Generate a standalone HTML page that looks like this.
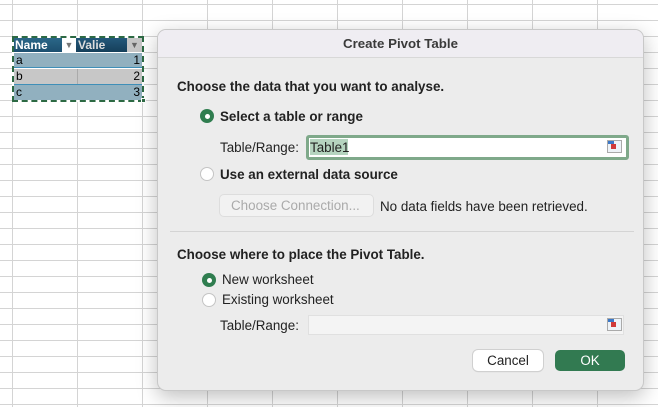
<!DOCTYPE html>
<html><head><style>
*{margin:0;padding:0;box-sizing:border-box}
body{width:658px;height:407px;overflow:hidden;background:#fff;font-family:"Liberation Sans",sans-serif;position:relative}
.grid{position:absolute;inset:0;background-image:linear-gradient(to right,#d4d4d4 1px,transparent 1px),linear-gradient(to bottom,#d4d4d4 1px,transparent 1px);background-size:65px 16px;background-position:12px 4px}
.abs{position:absolute}
.dlg{position:absolute;left:157px;top:29px;width:487px;height:362px;background:#ececec;border-radius:9px;border:1px solid #c8c8c8;box-shadow:0 6px 20px rgba(0,0,0,.25);overflow:hidden;color:#222}
.tb{height:28px;background:#efedf2;border-bottom:1px solid #d8d8d8;text-align:center;font-weight:bold;font-size:13.3px;line-height:28px;color:#3a3a3a}
.t{position:absolute;font-size:13.4px;white-space:nowrap}
.b{font-weight:bold}
.r{position:absolute;width:14px;height:14px;border-radius:50%;background:#fff;border:1px solid #c4c4c4}
.r.on{background:#2f7d4f;border:none}
.r.on:after{content:"";position:absolute;left:4.5px;top:4.5px;width:5px;height:5px;border-radius:50%;background:#fff}
.ic{position:absolute;width:15px;height:13px;border:1px solid #aaa;background:#eef3f8}
.cell{font-size:12px;line-height:15px;padding:0 2px}
</style></head><body>
<div class="grid"></div>
<div class="abs" style="left:12px;top:36px;width:132px;height:66px;border:2px dashed #2d6a44;background:#fff"></div>
<div class="abs" style="left:14px;top:38px;width:49px;height:14px;background:linear-gradient(#2b6788,#1d4f6f);color:#fff;font-weight:bold;font-size:12px;line-height:14px;padding-left:1px">Name</div>
<div class="abs" style="left:62px;top:38px;width:14px;height:14px;background:#fff;color:#777;font-size:9px;text-align:center;line-height:14px">▼</div>
<div class="abs" style="left:76px;top:38px;width:51px;height:14px;background:linear-gradient(#24587a,#153f5a);color:#ddd;font-weight:bold;font-size:12px;line-height:14px;padding-left:2px">Valie</div>
<div class="abs" style="left:127px;top:38px;width:15px;height:14px;background:#c6c6c6;color:#666;font-size:9px;text-align:center;line-height:14px">▼</div>
<div class="abs cell" style="left:14px;top:53px;width:128px;height:15px;background:#91b0bf;border-bottom:1px solid #3f8fb8">a<span style="float:right">1</span></div>
<div class="abs cell" style="left:14px;top:69px;width:128px;height:16px;background:#c7c7c7;border-bottom:1px solid #3f8fb8">b<span style="float:right">2</span></div>
<div class="abs" style="left:77px;top:69px;width:1px;height:15px;background:#aaa"></div>
<div class="abs cell" style="left:14px;top:85px;width:128px;height:15px;background:#91b0bf">c<span style="float:right">3</span></div>
<div class="abs" style="left:141px;top:98px;width:5px;height:5px;background:#2d6a44;border:1px solid #fff"></div>

<div class="dlg">
<div class="tb">Create Pivot Table</div>
<div class="t b" style="left:19px;top:49px">Choose the data that you want to analyse.</div>
<div class="r on" style="left:42px;top:79px"></div>
<div class="t b" style="left:62px;top:79px">Select a table or range</div>
<div class="t" style="left:62px;top:110px">Table/Range:</div>
<div class="abs" style="left:148px;top:105px;width:323px;height:25px;border:3px solid #7fa98a;border-radius:3px;background:#fff"></div>
<div class="abs" style="left:152px;top:109px;width:38px;height:16px;background:#b5d4bf"></div>
<div class="t" style="left:152px;top:110px">Table1</div>
<div class="ic" style="left:449px;top:110px"></div>
<div class="abs" style="left:450px;top:111px;width:6px;height:3px;background:#3b78c8"></div>
<div class="abs" style="left:453px;top:114px;width:5px;height:5px;background:#d03a3a"></div>
<div class="r" style="left:42px;top:137px"></div>
<div class="t b" style="left:62px;top:137px">Use an external data source</div>
<div class="abs" style="left:62px;top:165px;width:153px;height:21px;background:#f2f2f2;border-radius:4px;box-shadow:0 0 0 1px #ddd"></div>
<div class="t" style="left:73px;top:168px;color:#aaa">Choose Connection...</div>
<div class="t" style="left:222px;top:169px">No data fields have been retrieved.</div>
<div class="abs" style="left:12px;top:201px;width:464px;height:1px;background:#d4d4d4"></div>
<div class="t b" style="left:19px;top:217px">Choose where to place the Pivot Table.</div>
<div class="r on" style="left:44px;top:243px"></div>
<div class="t" style="left:64px;top:242px">New worksheet</div>
<div class="r" style="left:44px;top:263px"></div>
<div class="t" style="left:64px;top:262px">Existing worksheet</div>
<div class="t" style="left:62px;top:288px">Table/Range:</div>
<div class="abs" style="left:150px;top:285px;width:316px;height:20px;background:#f4f4f4;border:1px solid #e0e0e0"></div>
<div class="ic" style="left:449px;top:288px"></div>
<div class="abs" style="left:450px;top:289px;width:6px;height:3px;background:#3b78c8"></div>
<div class="abs" style="left:453px;top:292px;width:5px;height:5px;background:#d03a3a"></div>
<div class="abs" style="left:315px;top:320px;width:70px;height:21px;background:#fff;border-radius:5px;box-shadow:0 0 0 1px #d0d0d0,0 1px 1px rgba(0,0,0,.15);text-align:center;font-size:13.4px;line-height:21px">Cancel</div>
<div class="abs" style="left:397px;top:320px;width:70px;height:21px;background:#327a51;border-radius:5px;color:#fff;text-align:center;font-size:13.4px;line-height:21px">OK</div>
</div>
</body></html>
